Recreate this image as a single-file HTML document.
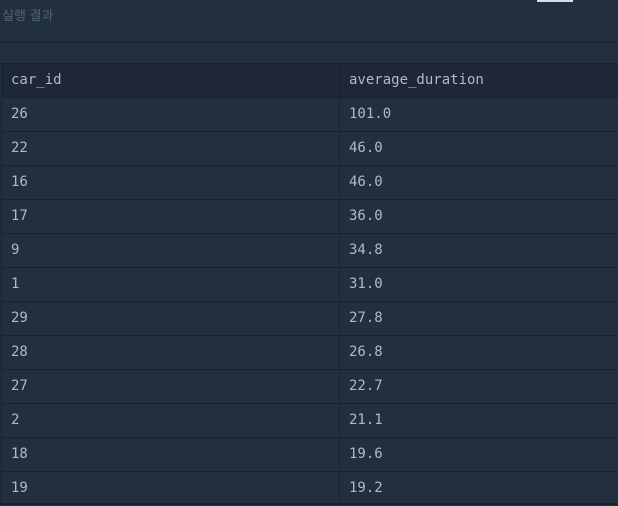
<!DOCTYPE html>
<html><head><meta charset="utf-8"><style>
body{margin:0;width:618px;height:505px;background:#212f3f;overflow:hidden;font-family:"DejaVu Sans Mono",monospace;position:relative}
.t{position:absolute;left:2px;top:5px;font:13px "Liberation Sans","Noto Sans CJK KR",sans-serif;color:#4d6378}
.tab{position:absolute;left:537px;top:0;width:36px;height:2px;background:#d8dde2}
.hl{position:absolute;left:0;top:42px;width:618px;height:1px;background:#19232f}
.r{position:absolute;left:1px;width:620px;height:34px;border-top:1px solid #172130;border-left:1px solid #172130;box-sizing:border-box;font-size:14px;color:#aebbc7;line-height:33px}
.r.h{background:#1d2735}
.r span{position:absolute;left:9px}
.r span+span{left:347px}
.r:before{content:"";position:absolute;left:337px;top:0;width:1px;height:34px;background:#172130}
</style></head><body>
<div class="t">실행 결과</div><div class="tab"></div><div class="hl"></div>
<div class="r h" style="top:63px"><span>car_id</span><span>average_duration</span></div>
<div class="r" style="top:97px"><span>26</span><span>101.0</span></div>
<div class="r" style="top:131px"><span>22</span><span>46.0</span></div>
<div class="r" style="top:165px"><span>16</span><span>46.0</span></div>
<div class="r" style="top:199px"><span>17</span><span>36.0</span></div>
<div class="r" style="top:233px"><span>9</span><span>34.8</span></div>
<div class="r" style="top:267px"><span>1</span><span>31.0</span></div>
<div class="r" style="top:301px"><span>29</span><span>27.8</span></div>
<div class="r" style="top:335px"><span>28</span><span>26.8</span></div>
<div class="r" style="top:369px"><span>27</span><span>22.7</span></div>
<div class="r" style="top:403px"><span>2</span><span>21.1</span></div>
<div class="r" style="top:437px"><span>18</span><span>19.6</span></div>
<div class="r" style="top:471px"><span>19</span><span>19.2</span></div>
<div style="position:absolute;left:0;top:503px;width:618px;height:2px;background:#172130"></div>
</body></html>
